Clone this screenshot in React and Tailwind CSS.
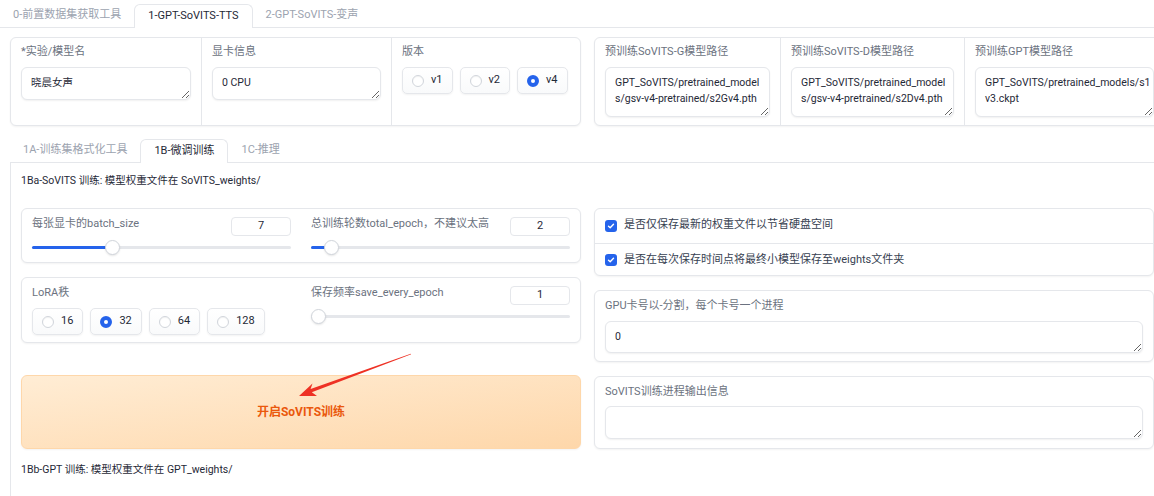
import React from 'react';

const FONT = { fontFamily: 'Roboto, "Noto Sans CJK SC", sans-serif' };

const TOP_TABS = ['0-前置数据集获取工具', '1-GPT-SoVITS-TTS', '2-GPT-SoVITS-变声'];
const SUB_TABS = ['1A-训练集格式化工具', '1B-微调训练', '1C-推理'];

function Tabs({ items, active, className = '' }) {
  return (
    <div className={`flex items-end border-b border-[#e5e7eb] ${className}`}>
      {items.map((t, i) =>
        i === active ? (
          <div key={t} className="h-[24px] -mb-px px-[13px] flex items-center bg-white border border-b-0 border-[#e5e7eb] rounded-t-[6px] text-[11px] text-[#1f2937]">{t}</div>
        ) : (
          <div key={t} className="h-[23px] px-[13px] flex items-center text-[11px] text-[#9ca3af]">{t}</div>
        )
      )}
    </div>
  );
}

function Label({ children, className = '' }) {
  return <div className={`text-[11px] leading-[14px] text-[#6b7280] whitespace-nowrap ${className}`}>{children}</div>;
}

function Box({ lines, h, className = '' }) {
  return (
    <textarea
      readOnly
      wrap="off"
      value={lines.join('\n')}
      className={`block w-full resize-y overflow-hidden bg-white border border-[#e5e7eb] rounded-[6px] shadow-[0_1px_2px_rgba(0,0,0,0.06)] px-[9px] pt-[7px] text-[10.5px] leading-[16px] text-[#1f2937] outline-none ${h} ${className}`}
      style={FONT}
    />
  );
}

function Radio({ label, checked }) {
  return (
    <div className="h-[27px] flex items-center gap-[7px] px-[9px] rounded-[5px] border border-[#e5e7eb] bg-gradient-to-b from-white to-[#f9fafb] shadow-[0_1px_2px_rgba(0,0,0,0.05)]">
      {checked ? (
        <span className="w-[12px] h-[12px] rounded-full border-[4px] border-[#2563eb] bg-white" />
      ) : (
        <span className="w-[12px] h-[12px] rounded-full border border-[#d1d5db] bg-white shadow-[inset_0_1px_1px_rgba(0,0,0,0.05)]" />
      )}
      <span className="text-[11px] text-[#1f2937]">{label}</span>
    </div>
  );
}

function Slider({ pct }) {
  // thumb centre travels from 7.5px to width-7.5px
  const pos = `calc(7.5px + (100% - 15px) * ${pct})`;
  return (
    <div className="relative h-[15px] mt-[4px]">
      <div className="absolute left-0 right-0 top-[6px] h-[3px] rounded-full bg-[#e5e7eb]" />
      <div className="absolute left-0 top-[6px] h-[3px] rounded-full bg-[#2563eb]" style={{ width: pct > 0 ? pos : 0 }} />
      <div className="absolute top-0 w-[15px] h-[15px] -ml-[7.5px] rounded-full bg-white border border-[#d1d5db] shadow-[0_1px_2px_rgba(0,0,0,0.1)]" style={{ left: pos }} />
    </div>
  );
}

function NumberSlider({ label, value, pct }) {
  return (
    <div>
      <div className="flex justify-between items-start">
        <Label>{label}</Label>
        <div className="w-[60px] h-[19px] flex items-center justify-center rounded-[4px] border border-[#e5e7eb] bg-white text-[11px] text-[#1f2937]">{value}</div>
      </div>
      <Slider pct={pct} />
    </div>
  );
}

function Check({ children, border }) {
  return (
    <div className={`h-[34px] flex items-center gap-[7px] px-[10px] ${border ? 'border-t border-[#e5e7eb]' : ''}`}>
      <span className="w-[12px] h-[12px] rounded-[3px] bg-[#2563eb] flex items-center justify-center">
        <svg width="8" height="8" viewBox="0 0 8 8"><path d="M1.5 4.2 L3.2 5.8 L6.5 2.3" fill="none" stroke="white" strokeWidth="1.4" strokeLinecap="round" strokeLinejoin="round" /></svg>
      </span>
      <span className="text-[11px] text-[#374151] whitespace-nowrap">{children}</span>
    </div>
  );
}

const block = 'border border-[#e5e7eb] rounded-[6px] bg-white shadow-[0_1px_2px_rgba(0,0,0,0.05)]';

export default function App() {
  return (
    <div className="relative w-[1154px] h-[496px] overflow-hidden bg-white" style={FONT}>
      <div className="w-[1176px]">
        <Tabs items={TOP_TABS} active={1} className="h-[28px]" />

        <div className="px-[10px] pt-[9px]">
          {/* top row */}
          <div className="flex gap-[13px]">
            <div className={`w-[571px] h-[89px] flex ${block}`}>
              <div className="w-[190px] px-[10px] pt-[7px]">
                <Label>*实验/模型名</Label>
                <Box lines={['晓晨女声']} h="h-[33px]" className="mt-[8px]" />
              </div>
              <div className="w-[190px] px-[10px] pt-[7px] border-l border-[#e5e7eb]">
                <Label>显卡信息</Label>
                <Box lines={['0 CPU']} h="h-[33px]" className="mt-[8px]" />
              </div>
              <div className="flex-1 px-[10px] pt-[7px] border-l border-[#e5e7eb]">
                <Label>版本</Label>
                <div className="flex gap-[7px] mt-[8px]">
                  <Radio label="v1" />
                  <Radio label="v2" />
                  <Radio label="v4" checked />
                </div>
              </div>
            </div>

            <div className={`w-[571px] h-[89px] flex ${block}`}>
              <div className="w-[185px] px-[10px] pt-[7px]">
                <Label>预训练SoVITS-G模型路径</Label>
                <Box lines={['GPT_SoVITS/pretrained_model', 's/gsv-v4-pretrained/s2Gv4.pth']} h="h-[50px]" className="mt-[8px]" />
              </div>
              <div className="w-[184px] px-[10px] pt-[7px] border-l border-[#e5e7eb]">
                <Label>预训练SoVITS-D模型路径</Label>
                <Box lines={['GPT_SoVITS/pretrained_model', 's/gsv-v4-pretrained/s2Dv4.pth']} h="h-[50px]" className="mt-[8px]" />
              </div>
              <div className="flex-1 px-[10px] pt-[7px] border-l border-[#e5e7eb]">
                <Label>预训练GPT模型路径</Label>
                <Box lines={['GPT_SoVITS/pretrained_models/s1', 'v3.ckpt']} h="h-[50px]" className="mt-[8px]" />
              </div>
            </div>
          </div>

          <Tabs items={SUB_TABS} active={1} className="mt-[13px] h-[24px] w-[1155px]" />

          {/* 1B panel */}
          <div className="w-[1155px] h-[400px] border-x border-[#e5e7eb] px-[10px] pt-[11px]">
            <div className="text-[10.5px] leading-[14px] text-[#1f2937]">1Ba-SoVITS 训练: 模型权重文件在 SoVITS_weights/</div>

            <div className="grid grid-cols-[560px_560px] gap-x-[13px] items-start mt-[19.5px]">
              <div className="flex flex-col">
                <div className={`h-[55px] px-[10px] pt-[8px] grid grid-cols-2 gap-x-[20px] ${block}`}>
                  <NumberSlider label="每张显卡的batch_size" value="7" pct={0.3} />
                  <NumberSlider label="总训练轮数total_epoch，不建议太高" value="2" pct={0.055} />
                </div>

                <div className={`h-[66px] mt-[14px] px-[10px] pt-[8px] grid grid-cols-2 gap-x-[20px] ${block}`}>
                  <div>
                    <Label>LoRA秩</Label>
                    <div className="flex gap-[7px] mt-[8.5px]">
                      <Radio label="16" />
                      <Radio label="32" checked />
                      <Radio label="64" />
                      <Radio label="128" />
                    </div>
                  </div>
                  <NumberSlider label="保存频率save_every_epoch" value="1" pct={0} />
                </div>

                <button className="mt-[32px] h-[74px] w-full rounded-[6px] border border-[#fed7aa] bg-gradient-to-br from-[#ffedd5] to-[#fed7aa] shadow-[0_1px_2px_rgba(0,0,0,0.05)] text-[12px] font-bold text-[#ea580c]">
                  开启SoVITS训练
                </button>
              </div>

              <div className="flex flex-col">
                <div className={`h-[68px] ${block}`}>
                  <Check>是否仅保存最新的权重文件以节省硬盘空间</Check>
                  <Check border>是否在每次保存时间点将最终小模型保存至weights文件夹</Check>
                </div>

                <div className={`h-[72px] mt-[14px] px-[10px] pt-[8px] ${block}`}>
                  <Label>GPU卡号以-分割，每个卡号一个进程</Label>
                  <Box lines={['0']} h="h-[32px]" className="mt-[8px]" />
                </div>

                <div className={`h-[73px] mt-[14px] px-[10px] pt-[8px] ${block}`}>
                  <Label>SoVITS训练进程输出信息</Label>
                  <Box lines={['']} h="h-[33px]" className="mt-[7.5px]" />
                </div>
              </div>
            </div>

            <div className="mt-[14.5px] text-[10.5px] leading-[14px] text-[#1f2937]">1Bb-GPT 训练: 模型权重文件在 GPT_weights/</div>
          </div>
        </div>
      </div>

      {/* red annotation arrow */}
      <svg className="absolute left-0 top-0 pointer-events-none" width="1154" height="496">
        <polygon
          points="299,396 317,396 311.8,392.2 411.2,354.3 410.8,353.7 310.6,388.9 312.5,383.5"
          fill="#ee3124"
        />
      </svg>
    </div>
  );
}
